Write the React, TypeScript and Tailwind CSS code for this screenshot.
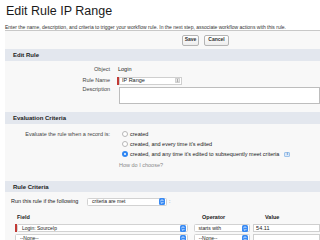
import React from 'react';

function Stepper() {
    return (
        <span className="flex h-[7px] w-[6px] shrink-0 items-center justify-center rounded-[1.5px] bg-[#3a8bf4]">
            <svg viewBox="0 0 6 7" className="h-[7px] w-[6px]">
                <path d="M1.6 3 L3 1.6 L4.4 3 M1.6 4 L3 5.4 L4.4 4" stroke="white" strokeWidth="0.8" fill="none" />
            </svg>
        </span>
    );
}

function Select({ text, className = '' }: { text: string; className?: string }) {
    return (
        <div className={`flex h-[8px] items-center justify-between rounded-[1.5px] border border-[#d2d2d2] bg-white pl-[4px] pr-[1px] ${className}`}>
            <span className="text-[5px] leading-[5px] text-[#222]">{text}</span>
            <Stepper />
        </div>
    );
}

function Radio({ checked }: { checked?: boolean }) {
    if (checked) {
        return (
            <span className="flex h-[6px] w-[6px] shrink-0 items-center justify-center rounded-full bg-[#2f86f2]">
                <span className="block h-[2px] w-[2px] rounded-full bg-white" />
            </span>
        );
    }
    return <span className="block h-[6px] w-[6px] shrink-0 rounded-full border-[0.6px] border-[#b8b8b8] bg-white" />;
}

function SectionHeader({ title, h = 'h-[12px]' }: { title: string; h?: string }) {
    return (
        <div className={`flex ${h} items-center bg-[#e3e7ee] pl-[8px]`}>
            <span className="text-[6px] font-bold leading-[6px] text-[#222]">{title}</span>
        </div>
    );
}

export default function App() {
    const radios = [
        { label: 'created' },
        { label: "created, and every time it's edited" },
        { label: "created, and any time it's edited to subsequently meet criteria", checked: true },
    ];

    return (
        <div className="flex h-[240px] w-[320px] flex-col overflow-hidden bg-white font-['Liberation_Sans',Arial,sans-serif] text-[#222]">
            <h1 className="pl-[6px] pt-[4px] text-[12.5px] leading-[14px] font-normal text-[#1a1a1a]">Edit Rule IP Range</h1>
            <p className="mt-[7px] whitespace-nowrap pl-[5px] text-[5px] leading-[5px] text-[#333]">
                Enter the name, description, and criteria to trigger your workflow rule. In the next step, associate workflow actions with this rule.
            </p>

            <div className="ml-[5px] flex-1 border-t border-[#c8c8c8] bg-[#f8f8f8]">
                {/* buttons */}
                <div className="flex h-[18px] items-center gap-[5px] pl-[177px]">
                    <button className="flex h-[11px] w-[17px] items-center justify-center rounded-[2px] border border-[#b5b5b5] bg-gradient-to-b from-white to-[#ededed] text-[5px] font-bold text-[#333]">
                        Save
                    </button>
                    <button className="flex h-[11px] w-[25px] items-center justify-center rounded-[2px] border border-[#b5b5b5] bg-gradient-to-b from-white to-[#ededed] text-[5px] font-bold text-[#333]">
                        Cancel
                    </button>
                </div>

                <SectionHeader title="Edit Rule" />
                <div className="flex flex-col pb-[8px] pt-[4px] text-[5.5px]">
                    <div className="flex h-[8px] items-center">
                        <span className="w-[105px] text-right text-[#444]">Object</span>
                        <span className="ml-[8px] text-[#222]">Login</span>
                    </div>
                    <div className="mt-[3px] flex h-[9px] items-center">
                        <span className="w-[105px] text-right text-[#444]">Rule Name</span>
                        <div className="ml-[7px] flex h-[8px] w-[65px] items-center">
                            <span className="h-full w-[2px] bg-[#c23934]" />
                            <div className="flex h-full flex-1 items-center justify-between border border-[#cfcfcf] bg-white pl-[2px] pr-[1px]">
                                <span className="text-[5.5px] leading-[5px] text-[#222]">IP Range</span>
                                <svg viewBox="0 0 6 6" className="h-[5px] w-[5px]">
                                    <rect x="0.4" y="0.4" width="5.2" height="5.2" rx="1" fill="#f2f2f2" stroke="#9a9a9a" strokeWidth="0.6" />
                                    <circle cx="3" cy="2.3" r="0.9" fill="#8a8a8a" />
                                    <path d="M1.5 4.8 Q3 3.2 4.5 4.8" fill="#8a8a8a" />
                                </svg>
                            </div>
                        </div>
                    </div>
                    <div className="mt-[2px] flex">
                        <span className="w-[105px] text-right leading-[5px] text-[#444]">Description</span>
                        <div className="ml-[9px] h-[17px] flex-1 border border-[#bdbdbd] bg-white" />
                    </div>
                </div>

                <SectionHeader title="Evaluation Criteria" />
                <div className="flex flex-col pb-[12px] pt-[6px] text-[5.5px]">
                    {radios.map((r, i) => (
                        <div key={r.label} className={`flex h-[8px] items-center ${i > 0 ? 'mt-[2px]' : ''}`}>
                            <span className="w-[105px] shrink-0 text-right text-[#444]">{i === 0 ? 'Evaluate the rule when a record is:' : ''}</span>
                            <span className="ml-[12px] flex shrink-0">
                                <Radio checked={r.checked} />
                            </span>
                            <span className="ml-[2px] whitespace-nowrap text-[#222]">{r.label}</span>
                            {r.checked && (
                                <span className="ml-[5px] flex h-[5px] w-[6px] shrink-0 items-center justify-center rounded-[1px] border border-[#9ec3ea] bg-[#dbe9f8] text-[4px] font-bold leading-[4px] text-[#2f6db5]">
                                    i
                                </span>
                            )}
                        </div>
                    ))}
                    <div className="mt-[3px] flex h-[8px] items-center">
                        <span className="ml-[114px] text-[#8a8a8a]">How do I choose?</span>
                    </div>
                </div>

                <SectionHeader title="Rule Criteria" h="h-[11px]" />
                <div className="flex flex-col pt-[5px] text-[5.5px]">
                    <div className="flex h-[9px] items-center pl-[6px]">
                        <span className="w-[76px] whitespace-nowrap text-[#222]">Run this rule if the following</span>
                        <Select text="criteria are met" className="w-[80px]" />
                        <span className="ml-[2px] text-[#666]">:</span>
                    </div>

                    <div className="mt-[7px] flex h-[8px] items-center pl-[10px] font-bold text-[#222]">
                        <span className="w-[181px] pl-[2px]">Field</span>
                        <span className="ml-[6px] w-[59px]">Operator</span>
                        <span className="ml-[3px] pl-[1px]">Value</span>
                    </div>

                    <div className="mt-[3px] flex h-[8px] items-center pl-[10px]">
                        <div className="flex w-[181px] items-center">
                            <span className="h-[8px] w-[2px] bg-[#c23934]" />
                            <Select text="Login: SourceIp" className="flex-1" />
                        </div>
                        <Select text="starts with" className="ml-[6px] w-[59px]" />
                        <div className="ml-[3px] flex h-[8px] w-[70px] items-center border border-[#cfcfcf] bg-white pl-[2px]">
                            <span className="text-[5.5px] leading-[5px]">54.11</span>
                        </div>
                    </div>

                    <div className="mt-[2px] flex h-[8px] items-center pl-[10px]">
                        <Select text="--None--" className="w-[181px]" />
                        <Select text="--None--" className="ml-[6px] w-[59px]" />
                        <div className="ml-[3px] h-[8px] w-[70px] border border-[#cfcfcf] bg-white" />
                    </div>
                </div>
            </div>
        </div>
    );
}
